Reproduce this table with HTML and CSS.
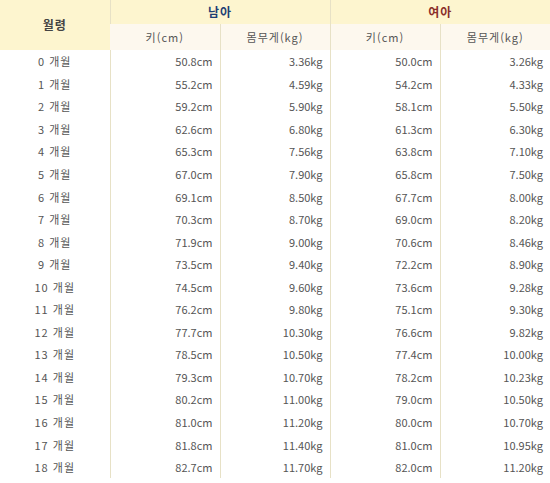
FILE: index.html
```html
<!DOCTYPE html>
<html lang="ko">
<head>
<meta charset="utf-8">
<link rel="stylesheet" href="styles.css">
</head>
<body>
<table class="growth">
  <colgroup><col class="c"><col class="c"><col class="c"><col class="c"><col class="c"></colgroup>
  <thead>
    <tr class="h1">
      <th rowspan="2" class="age-h">월령</th>
      <th colspan="2" class="boy">남아</th>
      <th colspan="2" class="girl">여아</th>
    </tr>
    <tr class="h2">
      <th>키(cm)</th><th>몸무게(kg)</th><th>키(cm)</th><th>몸무게(kg)</th>
    </tr>
  </thead>
  <tbody>
    <tr><td>0 개월</td><td>50.8cm</td><td>3.36kg</td><td>50.0cm</td><td>3.26kg</td></tr>
    <tr><td>1 개월</td><td>55.2cm</td><td>4.59kg</td><td>54.2cm</td><td>4.33kg</td></tr>
    <tr><td>2 개월</td><td>59.2cm</td><td>5.90kg</td><td>58.1cm</td><td>5.50kg</td></tr>
    <tr><td>3 개월</td><td>62.6cm</td><td>6.80kg</td><td>61.3cm</td><td>6.30kg</td></tr>
    <tr><td>4 개월</td><td>65.3cm</td><td>7.56kg</td><td>63.8cm</td><td>7.10kg</td></tr>
    <tr><td>5 개월</td><td>67.0cm</td><td>7.90kg</td><td>65.8cm</td><td>7.50kg</td></tr>
    <tr><td>6 개월</td><td>69.1cm</td><td>8.50kg</td><td>67.7cm</td><td>8.00kg</td></tr>
    <tr><td>7 개월</td><td>70.3cm</td><td>8.70kg</td><td>69.0cm</td><td>8.20kg</td></tr>
    <tr><td>8 개월</td><td>71.9cm</td><td>9.00kg</td><td>70.6cm</td><td>8.46kg</td></tr>
    <tr><td>9 개월</td><td>73.5cm</td><td>9.40kg</td><td>72.2cm</td><td>8.90kg</td></tr>
    <tr><td>10 개월</td><td>74.5cm</td><td>9.60kg</td><td>73.6cm</td><td>9.28kg</td></tr>
    <tr><td>11 개월</td><td>76.2cm</td><td>9.80kg</td><td>75.1cm</td><td>9.30kg</td></tr>
    <tr><td>12 개월</td><td>77.7cm</td><td>10.30kg</td><td>76.6cm</td><td>9.82kg</td></tr>
    <tr><td>13 개월</td><td>78.5cm</td><td>10.50kg</td><td>77.4cm</td><td>10.00kg</td></tr>
    <tr><td>14 개월</td><td>79.3cm</td><td>10.70kg</td><td>78.2cm</td><td>10.23kg</td></tr>
    <tr><td>15 개월</td><td>80.2cm</td><td>11.00kg</td><td>79.0cm</td><td>10.50kg</td></tr>
    <tr><td>16 개월</td><td>81.0cm</td><td>11.20kg</td><td>80.0cm</td><td>10.70kg</td></tr>
    <tr><td>17 개월</td><td>81.8cm</td><td>11.40kg</td><td>81.0cm</td><td>10.95kg</td></tr>
    <tr><td>18 개월</td><td>82.7cm</td><td>11.70kg</td><td>82.0cm</td><td>11.20kg</td></tr>
  </tbody>
</table>
</body>
</html>
```
FILE: styles.css
```css
html, body {
  margin: 0;
  padding: 0;
  background: #ffffff;
}
.growth {
  width: 550px;
  border-collapse: collapse;
  table-layout: fixed;
  font-family: "Noto Sans CJK KR", "DejaVu Sans", sans-serif;
  font-size: 11px;
  color: #555555;
}
.growth .c {
  width: 110px;
}
.growth th, .growth td {
  padding: 0;
  border-left: 1px solid #e7e1c6;
  line-height: 14px;
}
.growth th:first-child, .growth td:first-child {
  border-left: none;
}
.h1 th {
  height: 24px;
  background: #fdf5cf;
  font-size: 12px;
  font-weight: bold;
  letter-spacing: 1px;
}
.h1 .age-h {
  color: #444444;
}
.h1 .boy { color: #1f3f74; }
.h1 .girl { color: #8a2f2a; }
.h2 th {
  height: 26px;
  background: #fdf8ee;
  font-weight: normal;
  color: #555555;
  font-size: 11px;
  letter-spacing: 1px;
}
.growth tbody tr {
  height: 22.55px;
}
.growth td {
  text-align: right;
  padding-right: 7px;
}
.growth td:first-child {
  text-align: center;
  padding-right: 0;
  letter-spacing: 1px;
}
```
